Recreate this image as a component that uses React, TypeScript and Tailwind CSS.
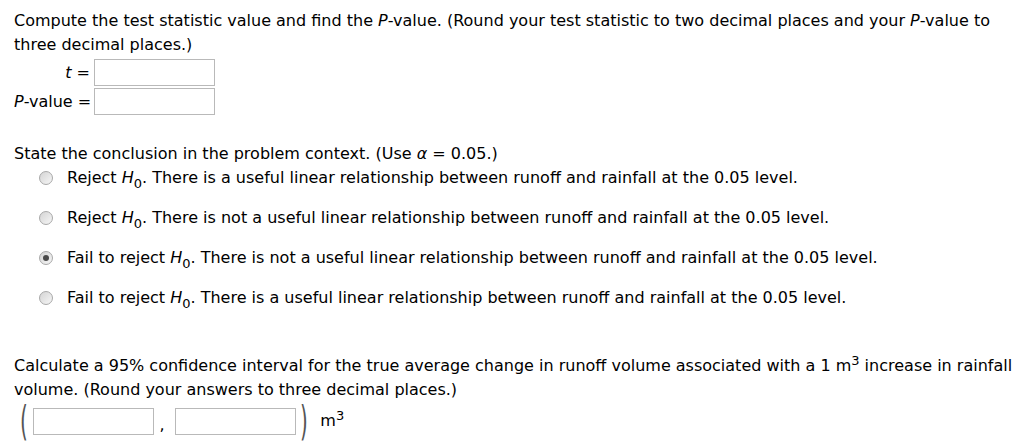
import React from "react";

const H0 = () => (
  <>
    <i>H</i>
    <sub className="bottom-[-5px] text-[13px]">0</sub>
  </>
);

const Radio = ({ checked = false }: { checked?: boolean }) => (
  <span className="flex h-[14px] w-[14px] shrink-0 items-center justify-center rounded-full border border-[#a8a8a8] bg-gradient-to-br from-[#d4d4d4] to-[#f6f6f6]">
    {checked && <span className="h-[6px] w-[6px] rounded-full bg-[#4a4a4a]" />}
  </span>
);

const Box = () => (
  <span className="block h-[27px] w-[121px] border border-[#b9b9b9] bg-white" />
);

const options = [
  { lead: "Reject", rest: "There is a useful linear relationship between runoff and rainfall at the 0.05 level." },
  { lead: "Reject", rest: "There is not a useful linear relationship between runoff and rainfall at the 0.05 level." },
  { lead: "Fail to reject", rest: "There is not a useful linear relationship between runoff and rainfall at the 0.05 level.", checked: true },
  { lead: "Fail to reject", rest: "There is a useful linear relationship between runoff and rainfall at the 0.05 level." },
];

export default function App() {
  return (
    <div className="min-h-[447px] bg-white pl-[14px] pt-[9px] text-[16px] leading-[24px] text-black font-['DejaVu_Sans',Verdana,sans-serif]">
      <p>
        Compute the test statistic value and find the <i>P</i>-value. (Round your test statistic to two decimal places and your <i>P</i>-value to three decimal places.)
      </p>

      <div className="mt-[2px] flex flex-col gap-[2px]">
        <div className="flex items-center">
          <span className="w-[76px] whitespace-nowrap text-right">
            <i>t</i>&nbsp;=
          </span>
          <span className="ml-[4px]"><Box /></span>
        </div>
        <div className="flex items-center">
          <span className="w-[76px] whitespace-nowrap text-right">
            <i>P</i>-value&nbsp;=
          </span>
          <span className="ml-[4px]"><Box /></span>
        </div>
      </div>

      <p className="mt-[27px]">
        State the conclusion in the problem context. (Use <i>α</i> = 0.05.)
      </p>

      <div className="flex flex-col gap-[16px]">
        {options.map((o, i) => (
          <div key={i} className="flex items-center pl-[25px]">
            <Radio checked={o.checked} />
            <span className="ml-[14px]">
              {o.lead} <H0 />. {o.rest}
            </span>
          </div>
        ))}
      </div>

      <p className="mt-[44px] pr-[8px]">
        Calculate a 95% confidence interval for the true average change in runoff volume associated with a 1 m
        <sup className="text-[13px]">3</sup> increase in rainfall volume. (Round your answers to three decimal places.)
      </p>

      <div className="mt-[3px] flex items-center">
        <span className="-my-[6px] ml-[2px] inline-block scale-x-[0.5] text-[40px] leading-[39px] text-[#555]">(</span>
        <span className="ml-[1px]"><Box /></span>
        <span className="ml-[6px] mr-[10px] mt-[8px]">,</span>
        <Box />
        <span className="-my-[6px] inline-block scale-x-[0.5] text-[40px] leading-[39px] text-[#555]">)</span>
        <span className="ml-[9px]">
          m<sup className="text-[13px]">3</sup>
        </span>
      </div>
    </div>
  );
}
